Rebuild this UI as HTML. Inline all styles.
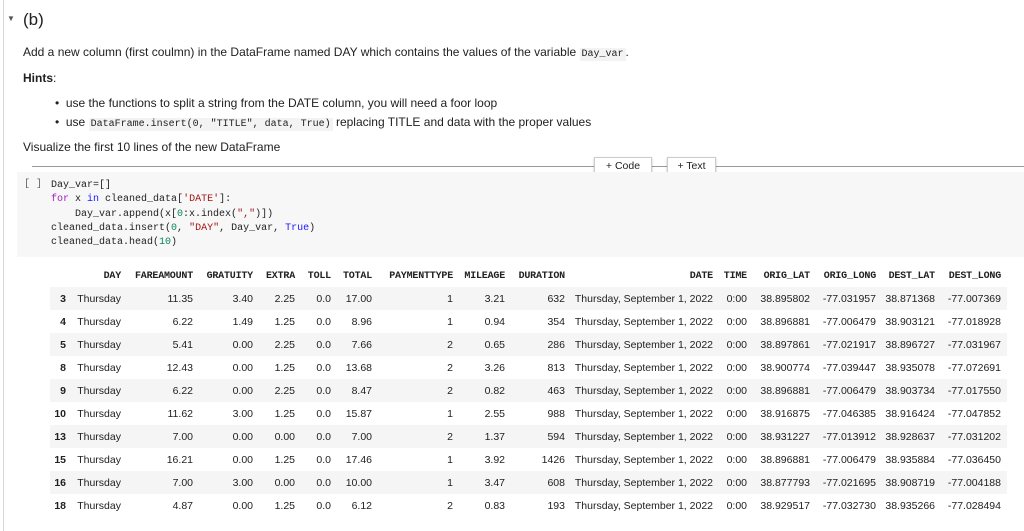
<!DOCTYPE html>
<html><head><style>
body{margin:0;width:1024px;height:531px;background:#fff;position:relative;overflow:hidden;font-family:"Liberation Sans",sans-serif;color:#212121}
.a{position:absolute;white-space:nowrap}
.mono{font-family:"Liberation Mono",monospace}
code{font-family:"Liberation Mono",monospace;font-size:10px;background:#f3f3f3;padding:1px 2px}
table{position:absolute;left:50px;top:266px;border-collapse:collapse;table-layout:fixed;width:957px}
td,th{text-align:right;padding:0 6px 0 0;height:23px;white-space:nowrap;overflow:visible}
th{font-family:"Liberation Mono",monospace;font-size:10px;font-weight:bold;height:21px;letter-spacing:-0.2px}
td{font-size:10.5px}
td:first-child{font-weight:bold}
tr.s td{background:#f5f5f5}
</style></head><body>
<div class="a" style="left:3px;top:0;width:1px;height:531px;background:#d8d8d8"></div>
<div class="a" style="left:7px;top:14px;font-size:8px;color:#555">▼</div>
<div class="a" style="left:23px;top:10px;font-size:17px">(b)</div>
<div class="a" style="left:23px;top:45px;font-size:12px">Add a new column (first coulmn) in the DataFrame named DAY which contains the values of the variable <code>Day_var</code>.</div>
<div class="a" style="left:23px;top:71px;font-size:12px;font-weight:bold">Hints<span style="font-weight:normal">:</span></div>
<div class="a" style="left:55px;top:96px;font-size:12px">•&nbsp; use the functions to split a string from the DATE column, you will need a foor loop</div>
<div class="a" style="left:55px;top:115px;font-size:12px">•&nbsp; use <code>DataFrame.insert(0, "TITLE", data, True)</code> replacing TITLE and data with the proper values</div>
<div class="a" style="left:23px;top:140px;font-size:12px">Visualize the first 10 lines of the new DataFrame</div>
<div class="a" style="left:32px;top:166px;width:992px;height:1px;background:#999"></div>
<div class="a" style="left:594px;top:157px;width:56px;height:17px;background:#fff;border:1px solid #ccc;box-shadow:0 1px 2px rgba(0,0,0,.25);font-size:10.5px;text-align:center;line-height:17px">+ Code</div>
<div class="a" style="left:667px;top:157px;width:47px;height:17px;background:#fff;border:1px solid #ccc;box-shadow:0 1px 2px rgba(0,0,0,.25);font-size:10.5px;text-align:center;line-height:17px">+ Text</div>
<div class="a" style="left:17px;top:172px;width:1007px;height:85px;background:#f7f7f7"></div>
<div class="a mono" style="left:24px;top:179px;font-size:10px;color:#666">[ ]</div>
<div class="a mono" style="left:51px;top:179px;font-size:10px;line-height:14.3px;color:#222;white-space:pre">Day_var=[]
<span style="color:#a020c0">for</span> x <span style="color:#1a1aff">in</span> cleaned_data[<span style="color:#a31515">'DATE'</span>]:
    Day_var.append(x[<span style="color:#098658">0</span>:x.index(<span style="color:#a31515">","</span>)])
cleaned_data.insert(<span style="color:#098658">0</span>, <span style="color:#a31515">"DAY"</span>, Day_var, <span style="color:#1a1aff">True</span>)
cleaned_data.head(<span style="color:#098658">10</span>)</div>
<table>
<colgroup><col style="width:22px"><col style="width:55px"><col style="width:72px"><col style="width:60px"><col style="width:42px"><col style="width:36px"><col style="width:41px"><col style="width:81px"><col style="width:52px"><col style="width:60px"><col style="width:148px"><col style="width:34px"><col style="width:63px"><col style="width:66px"><col style="width:59px"><col style="width:66px"></colgroup>
<tr><th></th><th>DAY</th><th>FAREAMOUNT</th><th>GRATUITY</th><th>EXTRA</th><th>TOLL</th><th>TOTAL</th><th>PAYMENTTYPE</th><th>MILEAGE</th><th>DURATION</th><th>DATE</th><th>TIME</th><th>ORIG_LAT</th><th>ORIG_LONG</th><th>DEST_LAT</th><th>DEST_LONG</th></tr>
<tr class="s"><td>3</td><td>Thursday</td><td>11.35</td><td>3.40</td><td>2.25</td><td>0.0</td><td>17.00</td><td>1</td><td>3.21</td><td>632</td><td>Thursday, September 1, 2022</td><td>0:00</td><td>38.895802</td><td>-77.031957</td><td>38.871368</td><td>-77.007369</td></tr>
<tr><td>4</td><td>Thursday</td><td>6.22</td><td>1.49</td><td>1.25</td><td>0.0</td><td>8.96</td><td>1</td><td>0.94</td><td>354</td><td>Thursday, September 1, 2022</td><td>0:00</td><td>38.896881</td><td>-77.006479</td><td>38.903121</td><td>-77.018928</td></tr>
<tr class="s"><td>5</td><td>Thursday</td><td>5.41</td><td>0.00</td><td>2.25</td><td>0.0</td><td>7.66</td><td>2</td><td>0.65</td><td>286</td><td>Thursday, September 1, 2022</td><td>0:00</td><td>38.897861</td><td>-77.021917</td><td>38.896727</td><td>-77.031967</td></tr>
<tr><td>8</td><td>Thursday</td><td>12.43</td><td>0.00</td><td>1.25</td><td>0.0</td><td>13.68</td><td>2</td><td>3.26</td><td>813</td><td>Thursday, September 1, 2022</td><td>0:00</td><td>38.900774</td><td>-77.039447</td><td>38.935078</td><td>-77.072691</td></tr>
<tr class="s"><td>9</td><td>Thursday</td><td>6.22</td><td>0.00</td><td>2.25</td><td>0.0</td><td>8.47</td><td>2</td><td>0.82</td><td>463</td><td>Thursday, September 1, 2022</td><td>0:00</td><td>38.896881</td><td>-77.006479</td><td>38.903734</td><td>-77.017550</td></tr>
<tr><td>10</td><td>Thursday</td><td>11.62</td><td>3.00</td><td>1.25</td><td>0.0</td><td>15.87</td><td>1</td><td>2.55</td><td>988</td><td>Thursday, September 1, 2022</td><td>0:00</td><td>38.916875</td><td>-77.046385</td><td>38.916424</td><td>-77.047852</td></tr>
<tr class="s"><td>13</td><td>Thursday</td><td>7.00</td><td>0.00</td><td>0.00</td><td>0.0</td><td>7.00</td><td>2</td><td>1.37</td><td>594</td><td>Thursday, September 1, 2022</td><td>0:00</td><td>38.931227</td><td>-77.013912</td><td>38.928637</td><td>-77.031202</td></tr>
<tr><td>15</td><td>Thursday</td><td>16.21</td><td>0.00</td><td>1.25</td><td>0.0</td><td>17.46</td><td>1</td><td>3.92</td><td>1426</td><td>Thursday, September 1, 2022</td><td>0:00</td><td>38.896881</td><td>-77.006479</td><td>38.935884</td><td>-77.036450</td></tr>
<tr class="s"><td>16</td><td>Thursday</td><td>7.00</td><td>3.00</td><td>0.00</td><td>0.0</td><td>10.00</td><td>1</td><td>3.47</td><td>608</td><td>Thursday, September 1, 2022</td><td>0:00</td><td>38.877793</td><td>-77.021695</td><td>38.908719</td><td>-77.004188</td></tr>
<tr><td>18</td><td>Thursday</td><td>4.87</td><td>0.00</td><td>1.25</td><td>0.0</td><td>6.12</td><td>2</td><td>0.83</td><td>193</td><td>Thursday, September 1, 2022</td><td>0:00</td><td>38.929517</td><td>-77.032730</td><td>38.935266</td><td>-77.028494</td></tr>
</table>
</body></html>
